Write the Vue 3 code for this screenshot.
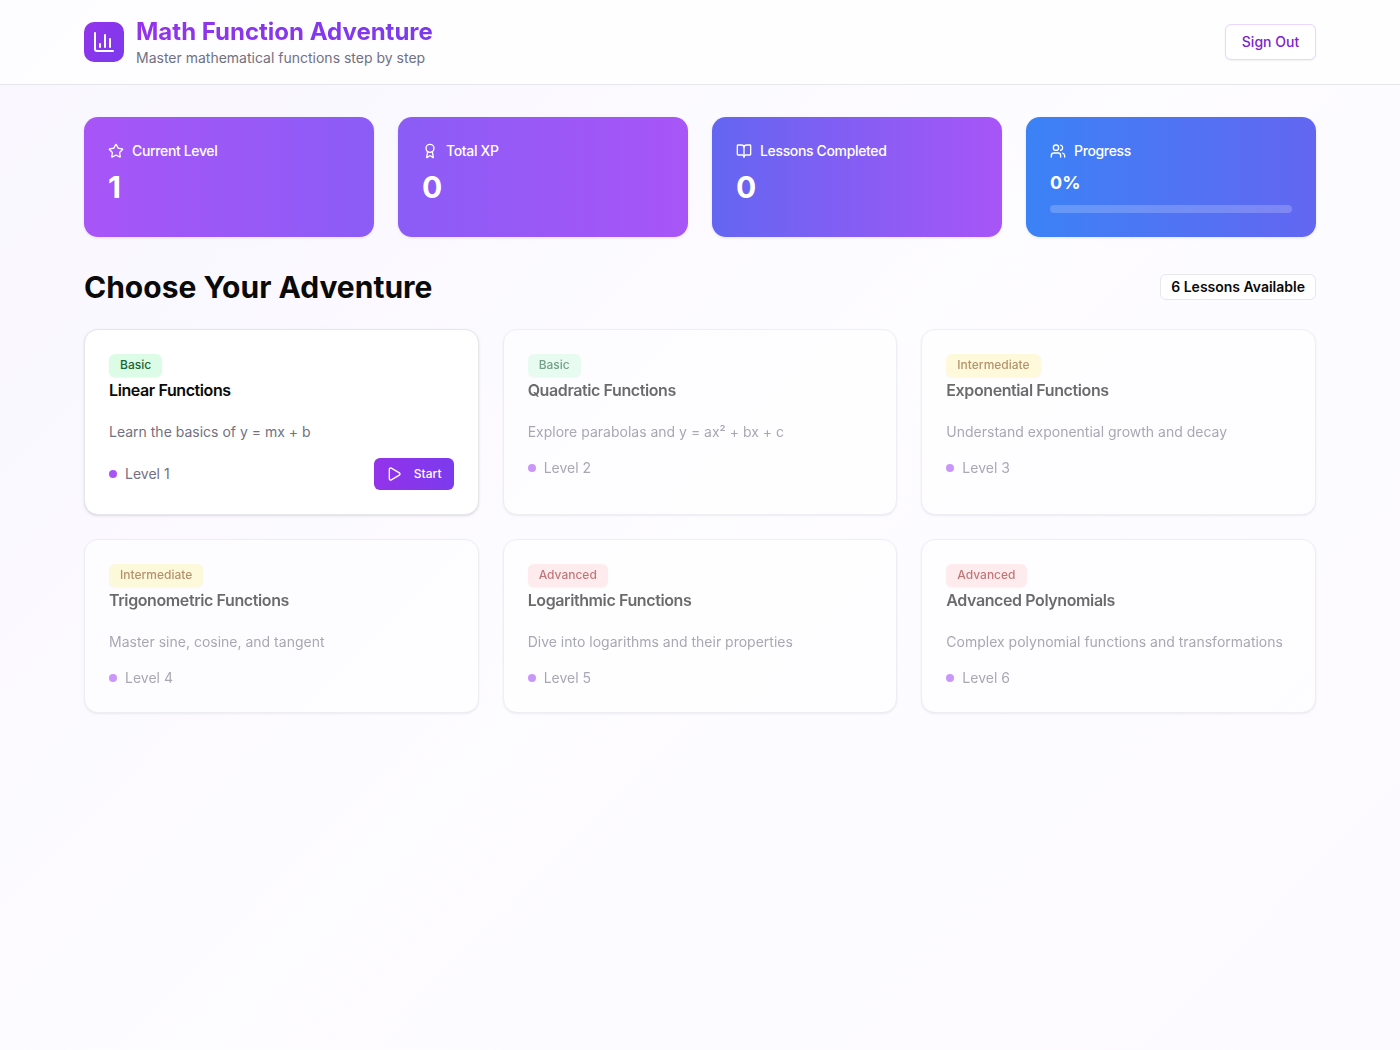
<script setup>
const stats = [
  { label: 'Current Level', value: '1', icon: 'star', tone: 'a' },
  { label: 'Total XP', value: '0', icon: 'award', tone: 'b' },
  { label: 'Lessons Completed', value: '0', icon: 'book', tone: 'c' },
]
const lessons = [
  { badge: 'Basic', kind: 'basic', title: 'Linear Functions', desc: 'Learn the basics of y = mx + b', level: 1, open: true },
  { badge: 'Basic', kind: 'basic', title: 'Quadratic Functions', desc: 'Explore parabolas and y = ax² + bx + c', level: 2 },
  { badge: 'Intermediate', kind: 'mid', title: 'Exponential Functions', desc: 'Understand exponential growth and decay', level: 3 },
  { badge: 'Intermediate', kind: 'mid', title: 'Trigonometric Functions', desc: 'Master sine, cosine, and tangent', level: 4 },
  { badge: 'Advanced', kind: 'adv', title: 'Logarithmic Functions', desc: 'Dive into logarithms and their properties', level: 5 },
  { badge: 'Advanced', kind: 'adv', title: 'Advanced Polynomials', desc: 'Complex polynomial functions and transformations', level: 6 },
]
</script>

<template>
  <div class="page">
    <header class="top">
      <div class="top-inner">
        <div class="brand">
          <div class="logo">
            <svg viewBox="0 0 24 24" class="logo-ic"><path d="M3 3v16a2 2 0 0 0 2 2h16" /><path d="M18 17V9" /><path d="M13 17V5" /><path d="M8 17v-3" /></svg>
          </div>
          <div>
            <h1 class="app-title">Math Function Adventure</h1>
            <p class="app-sub">Master mathematical functions step by step</p>
          </div>
        </div>
        <button class="signout">Sign Out</button>
      </div>
    </header>

    <main class="main">
      <section class="stats">
        <div v-for="s in stats" :key="s.label" class="stat" :class="s.tone">
          <div class="stat-label">
            <svg viewBox="0 0 24 24" class="ic">
              <template v-if="s.icon === 'star'"><path d="M11.525 2.295a.53.53 0 0 1 .95 0l2.31 4.679a2.123 2.123 0 0 0 1.595 1.16l5.166.756a.53.53 0 0 1 .294.904l-3.736 3.638a2.123 2.123 0 0 0-.611 1.878l.882 5.14a.53.53 0 0 1-.771.56l-4.618-2.428a2.122 2.122 0 0 0-1.973 0L6.396 21.01a.53.53 0 0 1-.77-.56l.881-5.139a2.122 2.122 0 0 0-.611-1.879L2.16 9.795a.53.53 0 0 1 .294-.906l5.165-.755a2.122 2.122 0 0 0 1.597-1.16z" /></template>
              <template v-else-if="s.icon === 'award'"><path d="m15.477 12.89 1.515 8.526a.5.5 0 0 1-.81.47l-3.58-2.687a1 1 0 0 0-1.197 0l-3.586 2.686a.5.5 0 0 1-.81-.469l1.514-8.526" /><circle cx="12" cy="8" r="6" /></template>
              <template v-else><path d="M12 7v14" /><path d="M3 18a1 1 0 0 1-1-1V4a1 1 0 0 1 1-1h5a4 4 0 0 1 4 4 4 4 0 0 1 4-4h5a1 1 0 0 1 1 1v13a1 1 0 0 1-1 1h-6a3 3 0 0 0-3 3 3 3 0 0 0-3-3z" /></template>
            </svg>
            <span>{{ s.label }}</span>
          </div>
          <div class="stat-value">{{ s.value }}</div>
        </div>
        <div class="stat d">
          <div class="stat-label">
            <svg viewBox="0 0 24 24" class="ic"><path d="M16 21v-2a4 4 0 0 0-4-4H6a4 4 0 0 0-4 4v2" /><circle cx="9" cy="7" r="4" /><path d="M22 21v-2a4 4 0 0 0-3-3.87" /><path d="M16 3.13a4 4 0 0 1 0 7.75" /></svg>
            <span>Progress</span>
          </div>
          <div class="stat-pct">0%</div>
          <div class="bar"></div>
        </div>
      </section>

      <section class="head-row">
        <h2 class="section-title">Choose Your Adventure</h2>
        <span class="count">6 Lessons Available</span>
      </section>

      <section class="grid">
        <article v-for="l in lessons" :key="l.title" class="card" :class="{ locked: !l.open }">
          <span class="badge" :class="l.kind">{{ l.badge }}</span>
          <h3 class="card-title">{{ l.title }}</h3>
          <p class="card-desc">{{ l.desc }}</p>
          <div class="card-foot">
            <div class="level"><i class="dot"></i>Level {{ l.level }}</div>
            <button v-if="l.open" class="start">
              <svg viewBox="0 0 24 24" class="play"><path d="M5 5a2 2 0 0 1 3.008-1.728l11.997 6.998a2 2 0 0 1 .003 3.458l-12 7A2 2 0 0 1 5 19z" /></svg>
              <span>Start</span>
            </button>
          </div>
        </article>
      </section>
    </main>
  </div>
</template>

<style>
html, body { margin: 0; padding: 0; }
</style>

<style scoped>
.page {
  min-height: 1050px;
  background: linear-gradient(135deg, #f9f6ff 0%, #fdfcff 50%, #fcfaff 100%);
  font-family: Inter, "Liberation Sans", sans-serif;
  color: #0a0a0a;
}
.top {
  height: 84px;
  background: rgba(255, 255, 255, 0.7);
  border-bottom: 1px solid #e5e7eb;
}
.top-inner {
  width: 1232px;
  height: 84px;
  margin: 0 auto;
  display: flex;
  align-items: center;
  justify-content: space-between;
}
.brand { display: flex; align-items: center; gap: 12px; }
.logo {
  width: 40px;
  height: 40px;
  border-radius: 10px;
  background: linear-gradient(135deg, #9333ea, #7c3aed);
  display: flex;
  align-items: center;
  justify-content: center;
}
.logo-ic { width: 24px; height: 24px; fill: none; stroke: #fff; stroke-width: 2; stroke-linecap: round; stroke-linejoin: round; }
.app-title {
  margin: 0;
  font-size: 24px;
  line-height: 32px;
  font-weight: 700;
  background: linear-gradient(90deg, #9333ea, #7c3aed);
  -webkit-background-clip: text;
  background-clip: text;
  color: transparent;
}
.app-sub { margin: 0; font-size: 14px; line-height: 20px; color: #717182; }
.signout {
  width: 91px;
  height: 36px;
  background: #fff;
  border: 1px solid #e9d5ff;
  border-radius: 6px;
  color: #7e22ce;
  font: 500 14px/20px Inter, sans-serif;
  box-shadow: 0 1px 2px rgba(0, 0, 0, 0.05);
}
.main { width: 1232px; margin: 0 auto; padding-top: 32px; }
.stats { display: grid; grid-template-columns: repeat(4, 1fr); gap: 24px; }
.stat {
  height: 120px;
  box-sizing: border-box;
  padding: 24px;
  border-radius: 14px;
  color: #fff;
  box-shadow: 0 1px 3px rgba(0, 0, 0, 0.1);
}
.a { background: linear-gradient(90deg, #a855f7, #8b5cf6); }
.b { background: linear-gradient(90deg, #8b5cf6, #a855f7); }
.c { background: linear-gradient(90deg, #6366f1, #a855f7); }
.d { background: linear-gradient(90deg, #3b82f6, #6366f1); }
.stat-label { display: flex; align-items: center; gap: 8px; font-size: 14px; line-height: 20px; font-weight: 500; letter-spacing: -0.35px; }
.ic { width: 16px; height: 16px; fill: none; stroke: #fff; stroke-width: 2; stroke-linecap: round; stroke-linejoin: round; }
.stat-value { margin-top: 8px; font-size: 30px; line-height: 36px; font-weight: 700; }
.stat-pct { margin-top: 8px; font-size: 18px; line-height: 28px; font-weight: 700; }
.bar { margin-top: 8px; height: 8px; border-radius: 999px; background: rgba(255, 255, 255, 0.2); }
.head-row { display: flex; align-items: center; justify-content: space-between; margin-top: 32px; margin-bottom: 24px; }
.section-title { margin: 0; font-size: 30px; line-height: 36px; font-weight: 700; }
.count {
  border: 1px solid #e5e7eb;
  border-radius: 6px;
  background: #fff;
  padding: 2px 10px;
  font-size: 14px;
  line-height: 20px;
  font-weight: 600;
}
.grid { display: grid; grid-template-columns: repeat(3, 1fr); gap: 24px; }
.card {
  box-sizing: border-box;
  padding: 24px;
  background: #fff;
  border: 1px solid #e5e7eb;
  border-radius: 14px;
  box-shadow: 0 1px 3px rgba(0, 0, 0, 0.1), 0 1px 2px -1px rgba(0, 0, 0, 0.1);
}
.locked { opacity: 0.6; }
.badge {
  display: block;
  width: fit-content;
  height: 23px;
  box-sizing: border-box;
  padding: 3px 11px;
  border-radius: 6px;
  font-size: 12px;
  line-height: 16px;
  font-weight: 500;
  box-shadow: 0 1px 2px rgba(0, 0, 0, 0.05);
}
.basic { background: #dcfce7; color: #166534; }
.mid { background: #fef9c3; color: #854d0e; }
.adv { background: #fee2e2; color: #991b1b; }
.card-title { margin: 0; font-size: 16px; line-height: 26px; font-weight: 600; letter-spacing: -0.4px; }
.card-desc { margin: 19px 0 16px; font-size: 14px; line-height: 20px; color: #717182; }
.card-foot { display: flex; align-items: center; justify-content: space-between; }
.level { display: flex; align-items: center; gap: 8px; font-size: 14px; line-height: 20px; color: #717182; }
.dot { width: 8px; height: 8px; border-radius: 50%; background: #a855f7; }
.start {
  width: 80px;
  height: 32px;
  border: 0;
  border-radius: 6px;
  background: linear-gradient(90deg, #9333ea, #7c3aed);
  color: #fff;
  font: 500 12px/16px Inter, sans-serif;
  display: flex;
  align-items: center;
  justify-content: center;
  gap: 12px;
  padding: 0;
}
.play { width: 16px; height: 16px; fill: none; stroke: #fff; stroke-width: 2; stroke-linecap: round; stroke-linejoin: round; }
</style>
